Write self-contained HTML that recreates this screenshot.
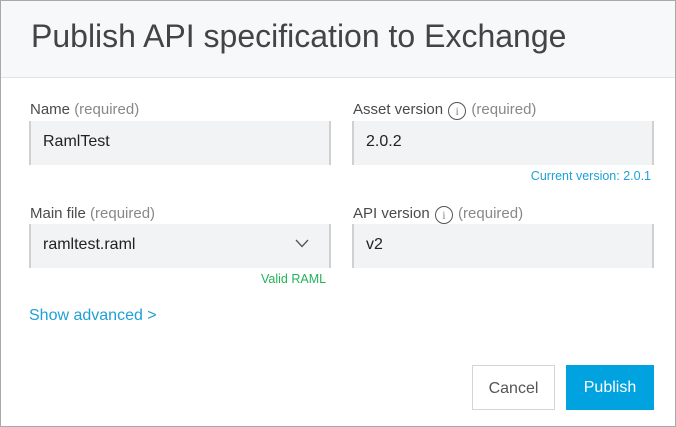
<!DOCTYPE html>
<html><head><style>
*{box-sizing:border-box;margin:0;padding:0}
body{width:676px;height:427px;background:#fff;font-family:"Liberation Sans",sans-serif;position:relative;overflow:hidden}
.frame{position:absolute;left:0;top:0;width:676px;height:427px;border:1px solid #a9a9a9}
.hdr{position:absolute;left:1px;top:1px;width:674px;height:77px;background:#f7f8fa;border-bottom:1px solid #e2e4e8}
.title{position:absolute;left:31px;top:18px;font-size:32px;color:#444;font-weight:300;letter-spacing:0}
.lbl{position:absolute;font-size:15px;color:#4a4a4a}
.lbl span{color:#888}
.inp{position:absolute;width:302px;height:44px;background:#f2f3f5;border-left:2px solid #d0d0d0;border-right:2px solid #d0d0d0;font-size:16px;color:#222;padding:12px 0 0 12px}
.info{display:inline-block;width:18px;height:18px;border:1.3px solid #555;border-radius:50%;vertical-align:-1px;text-align:center;font-size:12px;line-height:16px;color:#555;font-family:"Liberation Serif",serif;margin:0 1px}
.note{position:absolute;font-size:12.5px}
.btn{position:absolute;top:365px;height:45px;font-size:16px;text-align:center;line-height:45px}
</style></head><body>
<div class="frame"></div>
<div class="hdr"></div>
<div class="title">Publish API specification to Exchange</div>
<div class="lbl" style="left:30px;top:101px">Name <span>(required)</span></div>
<div class="inp" style="left:29px;top:121px">RamlTest</div>
<div class="lbl" style="left:353px;top:101px">Asset version <span class="info">i</span> <span>(required)</span></div>
<div class="inp" style="left:352px;top:121px">2.0.2</div>
<div class="note" style="right:25px;top:169px;color:#1ea0d8">Current version: 2.0.1</div>
<div class="lbl" style="left:30px;top:205px">Main file <span>(required)</span></div>
<div class="inp" style="left:29px;top:224px">ramltest.raml
<svg style="position:absolute;left:264px;top:15px" width="14" height="9" viewBox="0 0 14 9"><path d="M1 1L7 7.5L13 1" fill="none" stroke="#555" stroke-width="1.3"/></svg></div>
<div class="note" style="left:261px;top:272px;color:#22b35a">Valid RAML</div>
<div class="lbl" style="left:353px;top:205px">API version <span class="info">i</span> <span>(required)</span></div>
<div class="inp" style="left:352px;top:224px">v2</div>
<div style="position:absolute;left:29px;top:307px;font-size:16px;color:#1ea0d8">Show advanced &gt;</div>
<div class="btn" style="left:472px;width:83px;border:1px solid #d5d5d5;color:#555">Cancel</div>
<div class="btn" style="left:566px;width:88px;background:#00a2df;color:#fff">Publish</div>
</body></html>
